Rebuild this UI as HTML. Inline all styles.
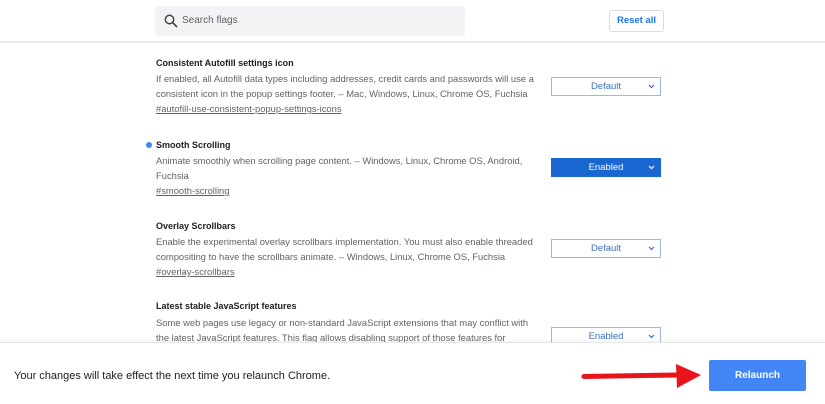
<!DOCTYPE html>
<html><head><meta charset="utf-8"><style>
*{margin:0;padding:0;box-sizing:border-box}
body{width:825px;height:404px;overflow:hidden;background:#fff;font-family:"Liberation Sans",sans-serif;position:relative;color:#202124}
.abs{position:absolute}
.search{left:155px;top:6px;width:310px;height:30px;background:#f1f3f4;border-radius:3px}
.search span{position:absolute;left:27px;top:9px;font-size:10px;color:#5f6368}
.reset{left:609px;top:10px;width:55px;height:22px;border:1px solid #dadce0;border-radius:3px;font-size:9.5px;font-weight:bold;color:#1a73e8;text-align:center;line-height:20px}
.div{left:0;top:41px;width:825px;height:2px;background:#ececec}
.t{font-size:9px;font-weight:bold;color:#202124;left:156px}
.d{font-size:9.4px;color:#5f6368;left:156px;line-height:14.5px;white-space:nowrap}
.l{font-size:9.4px;color:#5f6368;left:156px;text-decoration:underline}
.sel{left:551px;width:110px;height:19px;border:1px solid #9ab7e6;font-size:9.5px;color:#3b6fc4;text-align:center;line-height:17px}
.sel svg{position:absolute;right:5px;top:6px}
.sel.on{background:#1a67d2;border-color:#1a67d2;color:#fff}
.bar{left:0;top:342px;width:825px;height:62px;background:#fff;border-top:1px solid #e6e6e6;box-shadow:0 -1px 2px rgba(0,0,0,.05)}
.msg{left:14px;top:370px;font-size:11px;color:#202124}
.btn{left:709px;top:360px;width:97px;height:31px;background:#4285f4;border-radius:2px;color:#fff;font-size:10px;font-weight:bold;text-align:center;line-height:31px}
</style></head><body>
<div class="abs search"><svg class="abs" style="left:9px;top:8px" width="14" height="14" viewBox="0 0 14 14"><circle cx="5.5" cy="5.5" r="4.2" fill="none" stroke="#444" stroke-width="1.5"/><path d="M8.6 8.6L13 13" stroke="#444" stroke-width="1.6"/></svg><span>Search flags</span></div>
<div class="abs reset">Reset all</div>
<div class="abs div"></div>

<div class="abs t" style="top:58px">Consistent Autofill settings icon</div>
<div class="abs d" style="top:72px">If enabled, all Autofill data types including addresses, credit cards and passwords will use a<br>consistent icon in the popup settings footer. – Mac, Windows, Linux, Chrome OS, Fuchsia</div>
<div class="abs l" style="top:103px">#autofill-use-consistent-popup-settings-icons</div>
<div class="abs sel" style="top:77px">Default<svg width="7" height="5" viewBox="0 0 7 5"><path d="M1 1L3.5 3.5L6 1" fill="none" stroke="currentColor" stroke-width="1.2"/></svg></div>

<div class="abs" style="left:146px;top:142px;width:6px;height:6px;border-radius:50%;background:#4285f4"></div>
<div class="abs t" style="top:140px">Smooth Scrolling</div>
<div class="abs d" style="top:154px">Animate smoothly when scrolling page content. – Windows, Linux, Chrome OS, Android,<br>Fuchsia</div>
<div class="abs l" style="top:185px">#smooth-scrolling</div>
<div class="abs sel on" style="top:158px">Enabled<svg width="7" height="5" viewBox="0 0 7 5"><path d="M1 1L3.5 3.5L6 1" fill="none" stroke="currentColor" stroke-width="1.2"/></svg></div>

<div class="abs t" style="top:221px">Overlay Scrollbars</div>
<div class="abs d" style="top:235px">Enable the experimental overlay scrollbars implementation. You must also enable threaded<br>compositing to have the scrollbars animate. – Windows, Linux, Chrome OS, Fuchsia</div>
<div class="abs l" style="top:266px">#overlay-scrollbars</div>
<div class="abs sel" style="top:239px">Default<svg width="7" height="5" viewBox="0 0 7 5"><path d="M1 1L3.5 3.5L6 1" fill="none" stroke="currentColor" stroke-width="1.2"/></svg></div>

<div class="abs t" style="top:301px">Latest stable JavaScript features</div>
<div class="abs d" style="top:316px">Some web pages use legacy or non-standard JavaScript extensions that may conflict with<br>the latest JavaScript features. This flag allows disabling support of those features for</div>
<div class="abs sel" style="top:327px">Enabled<svg width="7" height="5" viewBox="0 0 7 5"><path d="M1 1L3.5 3.5L6 1" fill="none" stroke="currentColor" stroke-width="1.2"/></svg></div>

<div class="abs bar"></div>
<div class="abs msg">Your changes will take effect the next time you relaunch Chrome.</div>
<svg class="abs" style="left:580px;top:362px" width="124" height="28" viewBox="0 0 124 28"><path d="M4 14.5L98 13" stroke="#e8141c" stroke-width="5" stroke-linecap="round"/><path d="M96 2L121 13L97 26Z" fill="#e8141c"/></svg>
<div class="abs btn">Relaunch</div>
</body></html>
